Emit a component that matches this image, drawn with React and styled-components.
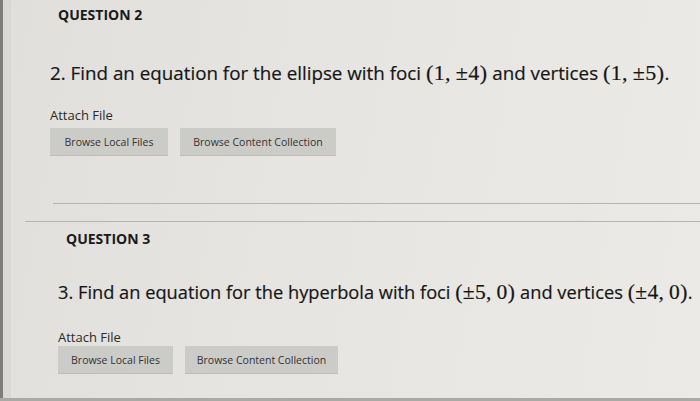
import React from "react";
import styled, { createGlobalStyle } from "styled-components";

const Global = createGlobalStyle`
  html, body { margin: 0; padding: 0; }
  body { width: 700px; height: 401px; overflow: hidden; background: #e2e1dd; }
`;

const Screen = styled.div`
  width: 700px;
  height: 401px;
  box-sizing: border-box;
  display: flex;
  background: linear-gradient(100deg, #e0dfdb 0%, #e6e5e1 45%, #ebeae6 100%);
  border-bottom: 3px solid #a9a9a6;
  font-family: "Open Sans", "Liberation Sans", sans-serif;
  color: #1d1d1d;
`;

const Edge = styled.div`
  width: 3px;
  flex: none;
  background: #7d7d7a;
`;

const Strip = styled.div`
  width: 8px;
  flex: none;
  background: #d9d8d4;
`;

const Page = styled.div`
  flex: 1;
  display: flex;
  flex-direction: column;
  margin-left: -11px;
`;

const Question = styled.section`
  display: flex;
  flex-direction: column;
  align-items: flex-start;
  padding-left: ${(p) => p.$indent}px;
`;

const Heading = styled.h2`
  margin: ${(p) => p.$top}px 0 0 8px;
  font-size: 14px;
  font-weight: 700;
  line-height: 20px;
  color: #1a1a1a;
`;

const Prompt = styled.p`
  margin: ${(p) => p.$top}px 0 0 0;
  font-size: ${(p) => p.$size}px;
  line-height: 26px;
  white-space: nowrap;
  color: #161616;
  -webkit-text-stroke: 0.2px #161616;
`;

const Math = styled.span`
  font-family: "Liberation Serif", "DejaVu Serif", serif;
  font-size: ${(p) => p.$size}px;
  letter-spacing: 0.4px;
`;

const Label = styled.div`
  margin-top: ${(p) => p.$top}px;
  font-size: 13px;
  line-height: 16px;
  color: #2a2a2a;
`;

const Buttons = styled.div`
  display: flex;
  gap: 12px;
  margin-top: ${(p) => p.$top}px;
`;

const Button = styled.button`
  height: 28px;
  width: ${(p) => p.$w}px;
  border: none;
  border-bottom: 1px solid #bdbdba;
  background: #cbcbc8;
  font-family: "Open Sans", "Liberation Sans", sans-serif;
  font-size: 10.5px;
  color: #333;
  padding: 0;
`;

const Rule = styled.hr`
  border: none;
  height: 1px;
  background: #b4b4b1;
  margin: ${(p) => p.$top}px 0 0 ${(p) => p.$left}px;
  width: calc(100% - ${(p) => p.$left}px);
`;

function Block({ num, indent, headTop, size, mathSize, text, math1, math2, gaps, widths }) {
  return (
    <Question $indent={indent}>
      <Heading $top={headTop}>QUESTION {num}</Heading>
      <Prompt $top={gaps[0]} $size={size}>
        {num}. Find an equation for the {text} with foci <Math $size={mathSize}>{math1}</Math> and vertices{" "}
        <Math $size={mathSize}>{math2}</Math>.
      </Prompt>
      <Label $top={gaps[1]}>Attach File</Label>
      <Buttons $top={gaps[2]}>
        <Button $w={widths[0]}>Browse Local Files</Button>
        <Button $w={widths[1]}>Browse Content Collection</Button>
      </Buttons>
    </Question>
  );
}

export default function App() {
  return (
    <>
      <Global />
      <Screen>
        <Edge />
        <Strip />
        <Page>
          <Block
            num={2}
            indent={50}
            headTop={5}
            size={18.8}
            mathSize={22}
            text="ellipse"
            math1={"(1,\u2009±4)"}
            math2={"(1,\u2009±5)"}
            gaps={[35, 21, 5]}
            widths={[118, 156]}
          />
          <Rule $top={47} $left={53} />
          <Rule $top={17} $left={25} />
          <Block
            num={3}
            indent={58}
            headTop={7}
            size={18.25}
            mathSize={21.5}
            text="hyperbola"
            math1={"(±5,\u20090)"}
            math2={"(±4,\u20090)"}
            gaps={[30, 24, 1]}
            widths={[115, 153]}
          />
        </Page>
      </Screen>
    </>
  );
}
